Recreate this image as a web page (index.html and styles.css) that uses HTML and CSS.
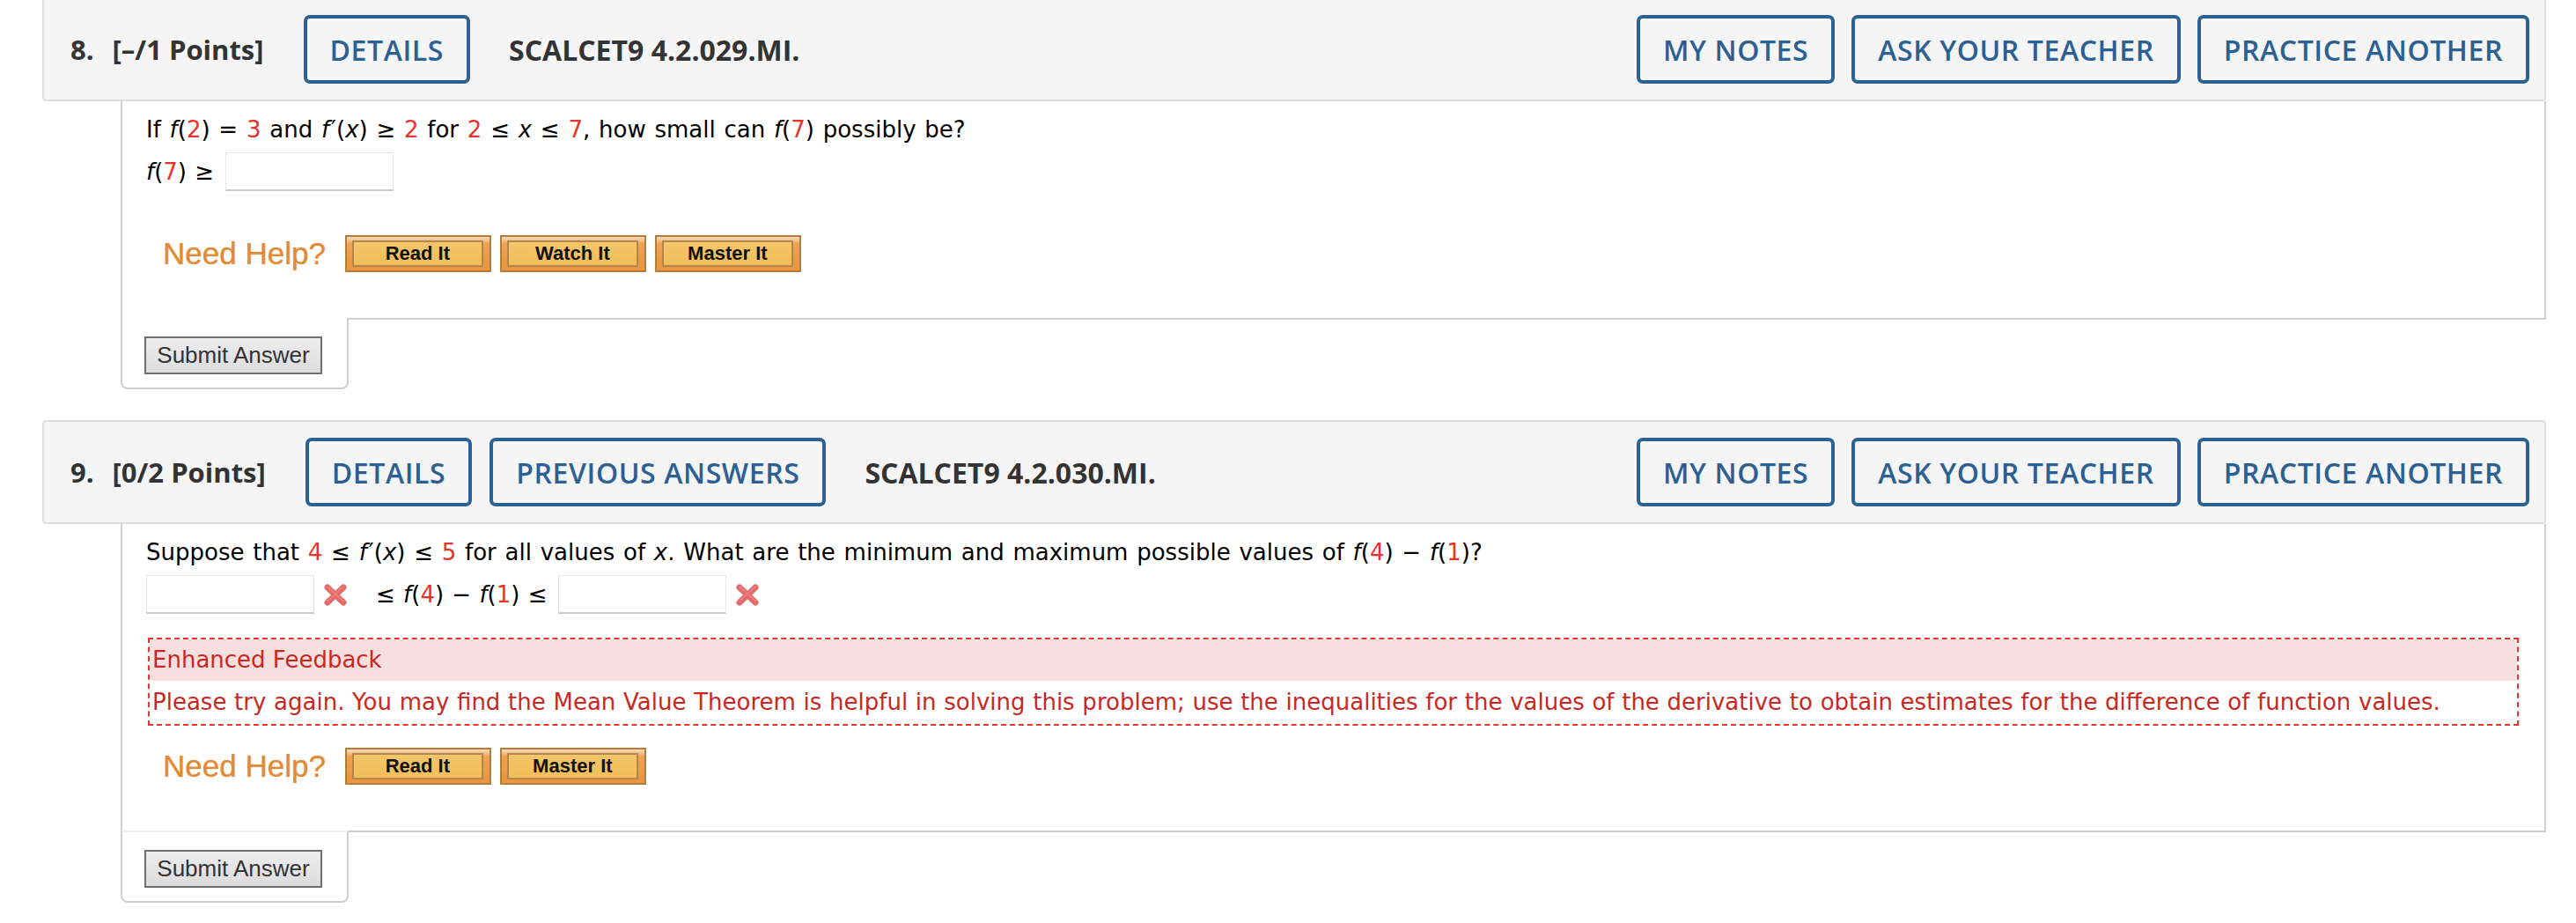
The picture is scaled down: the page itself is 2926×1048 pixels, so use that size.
FILE: index.html
```html
<!DOCTYPE html>
<html>
<head>
<meta charset="utf-8">
<link rel="stylesheet" href="styles.css">
</head>
<body>
<div class="card card-first">
  <div class="qhead">
    <span class="qnum">8.</span>
    <span class="qpts">[–/1 Points]</span>
    <button class="hbtn">DETAILS</button>
    <span class="qtitle">SCALCET9 4.2.029.MI.</span>
    <span class="spacer"></span>
    <div class="hright">
      <button class="hbtn">MY NOTES</button>
      <button class="hbtn">ASK YOUR TEACHER</button>
      <button class="hbtn">PRACTICE ANOTHER</button>
    </div>
  </div>
  <div class="qbody">
    <div class="qcontent">
      <p class="qtext">If <i>f</i>(<span class="red">2</span>) = <span class="red">3</span> and <i>f</i><span class="prime">′</span>(<i>x</i>) ≥ <span class="red">2</span> for <span class="red">2</span> ≤ <i>x</i> ≤ <span class="red">7</span>, how small can <i>f</i>(<span class="red">7</span>) possibly be?</p>
      <div class="ansrow">
        <span class="lbl1"><i>f</i>(<span class="red">7</span>) ≥</span>
        <span class="inp"></span>
      </div>
      <div class="help help-first">
        <span class="needhelp">Need Help?</span>
        <span class="hlp"><span class="hlp-in">Read It</span></span>
        <span class="hlp"><span class="hlp-in">Watch It</span></span>
        <span class="hlp"><span class="hlp-in">Master It</span></span>
      </div>
    </div>
    <div class="qfoot">
      <div class="tab"><button class="submit">Submit Answer</button></div>
      <div class="fill"></div>
    </div>
  </div>
</div>

<div class="card card-second">
  <div class="qhead">
    <span class="qnum">9.</span>
    <span class="qpts">[0/2 Points]</span>
    <button class="hbtn">DETAILS</button>
    <button class="hbtn">PREVIOUS ANSWERS</button>
    <span class="qtitle">SCALCET9 4.2.030.MI.</span>
    <span class="spacer"></span>
    <div class="hright">
      <button class="hbtn">MY NOTES</button>
      <button class="hbtn">ASK YOUR TEACHER</button>
      <button class="hbtn">PRACTICE ANOTHER</button>
    </div>
  </div>
  <div class="qbody">
    <div class="qcontent">
      <p class="qtext">Suppose that <span class="red">4</span> ≤ <i>f</i><span class="prime">′</span>(<i>x</i>) ≤ <span class="red">5</span> for all values of <i>x</i>. What are the minimum and maximum possible values of <i>f</i>(<span class="red">4</span>) − <i>f</i>(<span class="red">1</span>)?</p>
      <div class="ansrow">
        <span class="inp"></span>
        <svg class="xmark" width="28" height="27" viewBox="0 0 28 27"><path d="M5 5 L23 22 M23 5 L5 22" stroke="#e46a6a" stroke-width="7" stroke-linecap="round"/><path d="M5.5 4.5 L23 20.5 M22.5 4.5 L5 20.5" stroke="#ee8c8c" stroke-width="2" stroke-linecap="round" opacity="0.6"/></svg>
        <span class="lbl2">≤ <i>f</i>(<span class="red">4</span>) − <i>f</i>(<span class="red">1</span>) ≤</span>
        <span class="inp"></span>
        <svg class="xmark" width="28" height="27" viewBox="0 0 28 27"><path d="M5 5 L23 22 M23 5 L5 22" stroke="#e46a6a" stroke-width="7" stroke-linecap="round"/><path d="M5.5 4.5 L23 20.5 M22.5 4.5 L5 20.5" stroke="#ee8c8c" stroke-width="2" stroke-linecap="round" opacity="0.6"/></svg>
      </div>
      <div class="feedback">
        <div class="fb-title">Enhanced Feedback</div>
        <div class="fb-text">Please try again. You may find the Mean Value Theorem is helpful in solving this problem; use the inequalities for the values of the derivative to obtain estimates for the difference of function values.</div>
      </div>
      <div class="help help-second">
        <span class="needhelp">Need Help?</span>
        <span class="hlp"><span class="hlp-in">Read It</span></span>
        <span class="hlp"><span class="hlp-in">Master It</span></span>
      </div>
    </div>
    <div class="qfoot">
      <div class="tab tab-light"><button class="submit">Submit Answer</button></div>
      <div class="fill"></div>
    </div>
  </div>
</div>
</body>
</html>
```

FILE: styles.css
```css
* { box-sizing: border-box; }
body {
  margin: 0;
  background: #fff;
  font-family: "DejaVu Sans", Verdana, sans-serif;
  color: #000;
}
.card { margin-left: 48px; width: 2844px; }
.card-first { margin-top: -3px; }
.card-second { margin-top: 35px; }

.qhead {
  display: flex;
  align-items: center;
  background: #f5f5f5;
  border: 2px solid #dedede;
  border-radius: 4px;
  padding: 18px 17px 18px 30px;
  font-family: "Open Sans", sans-serif;
}
.qnum, .qpts, .qtitle {
  font-weight: 700;
  font-size: 31px;
  color: #333;
  white-space: nowrap;
}
.qpts { margin-left: 21px; margin-right: 45px; }
.qtitle { margin-left: 44px; font-size: 32px; }
.spacer { flex: 1; }
.hright { display: flex; gap: 19px; }
.hbtn {
  height: 78px;
  border: 4px solid #2b6095;
  border-radius: 7px;
  background: transparent;
  color: #2b6095;
  font-family: "Open Sans", sans-serif;
  font-weight: 600;
  font-size: 32px;
  letter-spacing: 0.6px;
  padding: 0 26px;
  white-space: nowrap;
}
.hbtn + .hbtn { margin-left: 20px; }
.hright .hbtn + .hbtn { margin-left: 0; }

.qbody { margin-left: 89px; }
.qcontent {
  border-left: 2px solid #cfcfcf;
  border-right: 2px solid #cfcfcf;
  padding: 14px 29px 52px 27px;
}
.qtext { margin: 0; font-size: 26px; line-height: 36px; word-spacing: 1.5px; }
.red { color: #e8332a; }
i { font-style: italic; }
.prime { margin-left: 2px; }

.ansrow {
  display: flex;
  align-items: center;
  margin-top: 8px;
  font-size: 26px;
  height: 44px;
  word-spacing: 1px;
}
.lbl1 { margin-right: 13px; }
.inp {
  display: block;
  width: 191px;
  height: 44px;
  border: 1px solid #e6e6e6;
  border-bottom: 2px solid #c9c9c9;
  background: #fff;
}
.xmark { margin-left: 10px; }
.lbl2 { margin-left: 32px; margin-right: 13px; white-space: nowrap; }

.help { display: flex; align-items: center; padding-left: 19px; }
.help-first { margin-top: 50px; }
.help-second { margin-top: 25px; }
.needhelp {
  font-family: "Liberation Sans", Arial, sans-serif;
  font-size: 35px;
  color: #e38a36;
  margin-right: 22px;
  line-height: 42px;
  text-shadow: 0 0 1px #eaa866;
}
.hlp {
  display: block;
  width: 166px;
  height: 42px;
  border: 2px solid #b77b3b;
  background: linear-gradient(#f7dcbd 0, #eda253 22%, #e8953c 100%);
  padding: 4px 7px 4px 6px;
  margin-right: 10px;
}
.hlp-in {
  display: block;
  height: 100%;
  border: 2px solid #b58550;
  background: linear-gradient(#f4c66a, #f1bd58);
  font-family: "Liberation Sans", Arial, sans-serif;
  font-weight: 700;
  font-size: 22px;
  line-height: 26px;
  text-align: center;
  color: #111;
}

.feedback {
  margin-top: 27px;
  margin-left: 2px;
  border: 2px dashed #e8362c;
  color: #c8281f;
  font-size: 26px;
}
.fb-title { background: #f8dfdf; line-height: 47px; padding-left: 3px; }
.fb-text { line-height: 49px; padding-left: 3px; white-space: nowrap; word-spacing: 0.45px; }

.qfoot { display: flex; }
.tab {
  width: 259px;
  border: 2px solid #cfcfcf;
  border-top: none;
  border-radius: 0 0 8px 8px;
  padding: 21px 0 15px 25px;
}
.tab-light { border-top: 2px solid #efefef; padding-top: 20px; }
.fill { flex: 1; border-top: 2px solid #cfcfcf; }
.submit {
  display: block;
  width: 202px;
  height: 43px;
  border: 2px solid #6f6f6f;
  background: linear-gradient(#ededed, #dcdcdc);
  font-family: "Liberation Sans", Arial, sans-serif;
  font-size: 26px;
  color: #333;
  padding: 0;
}
```
